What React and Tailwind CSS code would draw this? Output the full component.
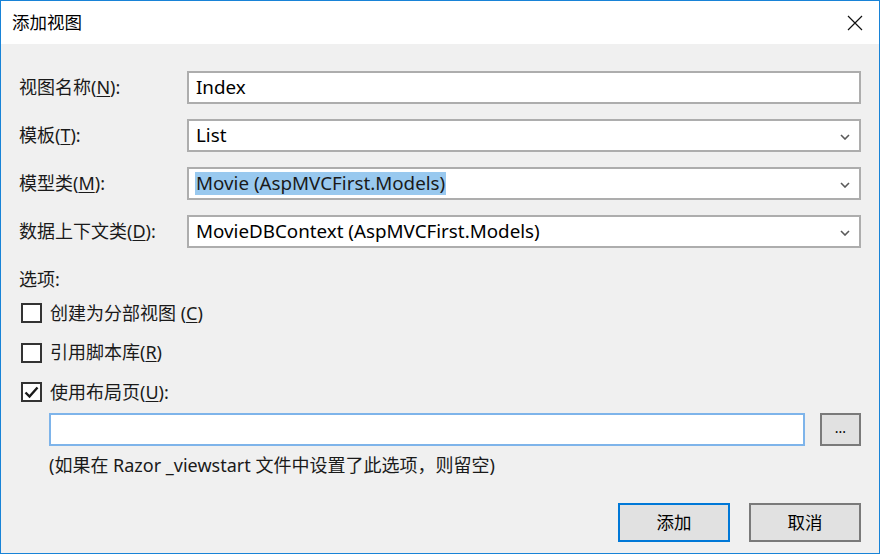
import React from "react";

const font = { fontFamily: '"Noto Sans", "Noto Sans CJK SC", sans-serif' };

const Chevron = () => (
  <svg width="10" height="6" viewBox="0 0 10 6" className="absolute right-[9px] top-[13px]">
    <path d="M1 1 L5 5 L9 1" fill="none" stroke="#5a5a5a" strokeWidth="1.6" />
  </svg>
);

const Field = ({ label, hot, value, select, selected }) => {
  const [pre, post] = label.split("|");
  return (
    <div className="flex items-center h-[33px]">
      <div className="w-[168px] text-[18px] text-[#1a1a1a] whitespace-nowrap">
        {pre}
        <span className="underline underline-offset-2">{hot}</span>
        {post}
      </div>
      <div className="relative flex-1 h-[33px] bg-white border-2 border-[#adadad] flex items-center pl-[6px]">
        <span
          className={`text-[18.8px] leading-[23px] px-[1px] ${selected ? "bg-[#99c9ef] text-[#1a1a1a]" : "text-black"}`}
        >
          {value}
        </span>
        {select && <Chevron />}
      </div>
    </div>
  );
};

const Check = ({ checked, children }) => (
  <div className="flex items-center h-[20px] gap-[8px] pl-[2px]">
    <div className="w-[21px] h-[20px] border-2 border-[#333] bg-white flex items-center justify-center">
      {checked && (
        <svg width="15" height="13" viewBox="0 0 15 13">
          <path d="M1.5 6.5 L5.5 10.5 L13.5 1.5" fill="none" stroke="#1a1a1a" strokeWidth="2.4" />
        </svg>
      )}
    </div>
    <div className="text-[18px] text-[#1a1a1a]">{children}</div>
  </div>
);

export default function App() {
  return (
    <div style={font} className="w-[880px] h-[554px] border border-[#1883d7] bg-[#f0f0f0] flex flex-col">
      <div className="h-[43px] bg-white flex items-center justify-between pl-[11px] pr-[16px]">
        <span className="text-[17.5px] text-black">添加视图</span>
        <svg width="16" height="16" viewBox="0 0 16 16">
          <path d="M1 1 L15 15 M15 1 L1 15" stroke="#111" strokeWidth="1.2" />
        </svg>
      </div>

      <div className="flex flex-col pl-[18px] pr-[18px] pt-[27px]">
        <div className="flex flex-col gap-[15px]">
          <Field label="视图名称(|):" hot="N" value="Index" />
          <Field label="模板(|):" hot="T" value="List" select />
          <Field label="模型类(|):" hot="M" value="Movie (AspMVCFirst.Models)" select selected />
          <Field label="数据上下文类(|):" hot="D" value="MovieDBContext (AspMVCFirst.Models)" select />
        </div>

        <div className="mt-[19px] text-[18px] text-[#1a1a1a] leading-[24px]">选项:</div>

        <div className="mt-[12px] flex flex-col gap-[19.5px]">
          <Check>
            创建为分部视图 (<span className="underline underline-offset-2">C</span>)
          </Check>
          <Check>
            引用脚本库(<span className="underline underline-offset-2">R</span>)
          </Check>
          <Check checked>
            使用布局页(<span className="underline underline-offset-2">U</span>):
          </Check>
        </div>

        <div className="mt-[11px] pl-[30px] flex items-center gap-[15px]">
          <div className="flex-1 h-[33px] bg-white border-2 border-[#7eb4ea]" />
          <button className="w-[41px] h-[33px] bg-[#e1e1e1] border-2 border-[#7a7a7a] text-[14px] leading-none pb-[4px]">
            ...
          </button>
        </div>

        <div className="mt-[7px] pl-[30px] text-[18px] text-[#1a1a1a] leading-[24px]">
          (如果在 Razor _viewstart 文件中设置了此选项，则留空)
        </div>

        <div className="mt-[26px] flex justify-end gap-[19px]">
          <button className="w-[112px] h-[39px] bg-[#e1e1e1] border-2 border-[#0078d7] text-[17.5px] text-black">
            添加
          </button>
          <button className="w-[112px] h-[39px] bg-[#e1e1e1] border-2 border-[#7a7a7a] text-[17.5px] text-black">
            取消
          </button>
        </div>
      </div>
    </div>
  );
}
